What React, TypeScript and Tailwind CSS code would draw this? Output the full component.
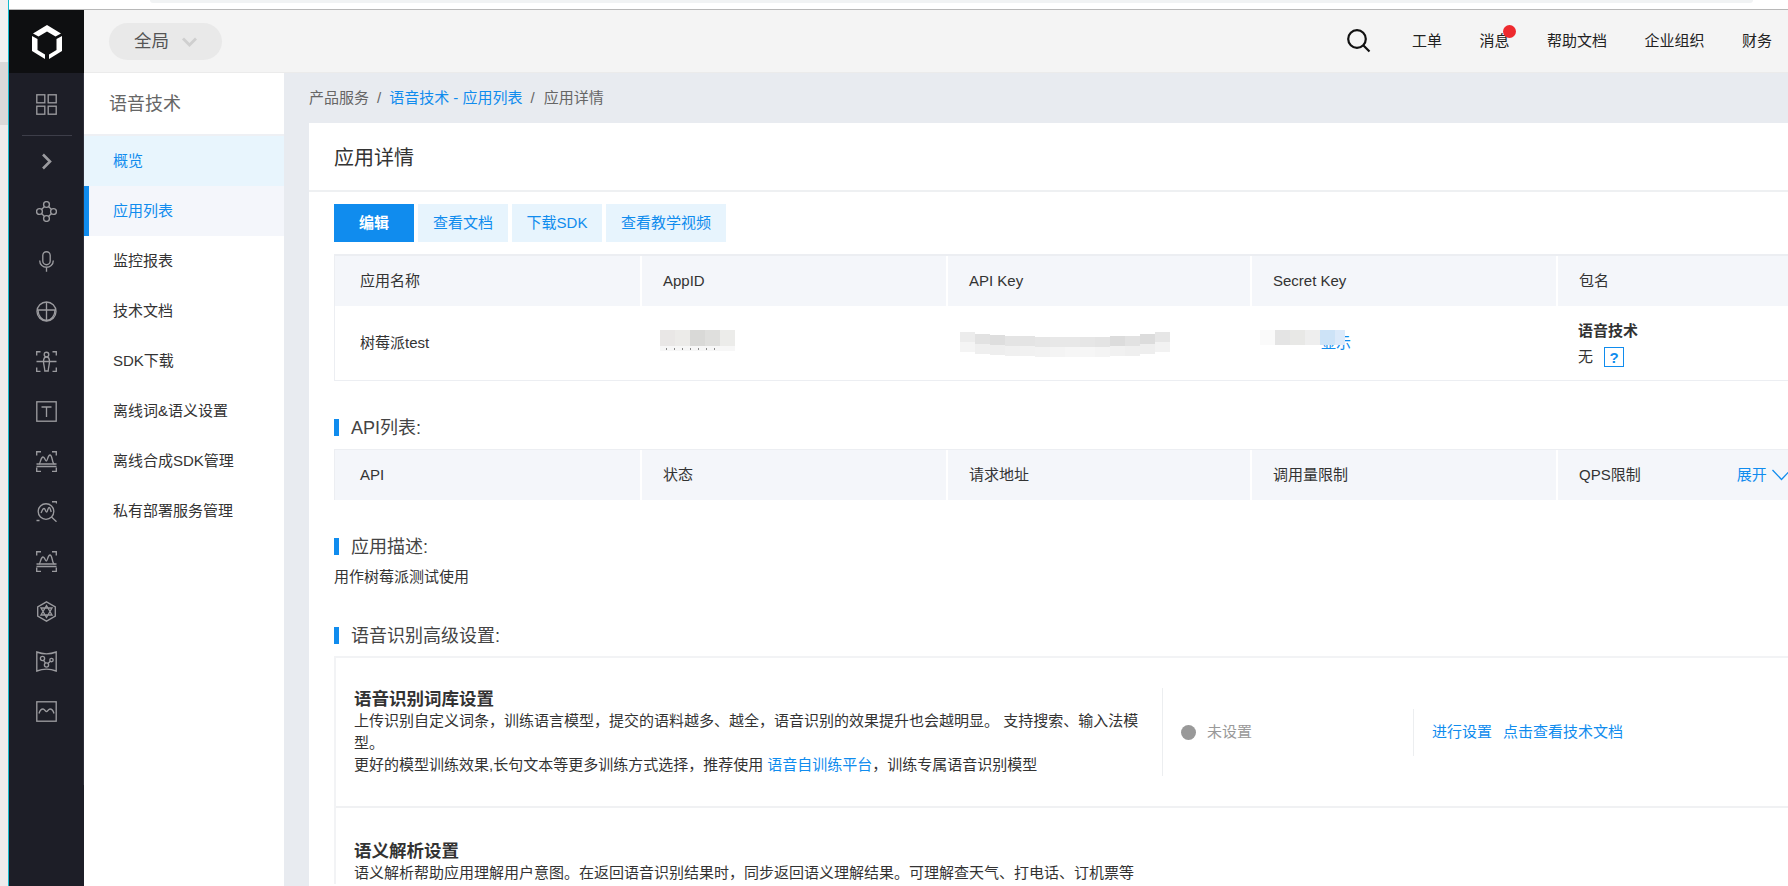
import React from "react";

const Ico = ({ children, w = 21 }: { children: React.ReactNode; w?: number }) => (
  <svg width={w} height={21} viewBox="0 0 21 21" fill="none" stroke="#9b9b9f" strokeWidth={1.35}>
    {children}
  </svg>
);

const Corners = () => (
  <path d="M.7 4.500V.7h4.300M16 .7h4.300v3.800M.7 16.500v3.800h4.300M16 20.300h4.300v-3.800" />
);
const Mountain = () => (
  <Ico>
    <Corners />
    <path d="M3 13c1.500 0 1.500-7 4-7 2 0 2 4 3.300 4s1.500-6 3.700-6c2.500 0 2 9 4.500 9" />
    <path d="M.5 13h20M.5 15.500h20" />
  </Ico>
);

const icons: React.ReactNode[] = [
  <svg width={21} height={21} viewBox="0 0 21 21" fill="none" stroke="#9b9b9f" strokeWidth={2.6} key="c">
    <path d="M7 3.500l7 7-7 7" />
  </svg>,
  <Ico key="n">
    <circle cx="10.500" cy="3.500" r="2.900" />
    <circle cx="3.500" cy="10.500" r="2.900" />
    <circle cx="17.500" cy="10.500" r="2.900" />
    <circle cx="10.500" cy="17.500" r="2.900" />
    <path d="M8.500 5.500 5.500 8.500M12.500 5.500 15.500 8.500M5.500 12.500 8.500 15.500M15.500 12.500 12.500 15.500" />
  </Ico>,
  <Ico key="m">
    <rect x="6.800" y=".7" width="7.400" height="13" rx="3.700" />
    <path d="M3.700 9.500c0 9 13.600 9 13.600 0M10.500 16v4.800" />
  </Ico>,
  <Ico key="g">
    <circle cx="10.500" cy="10.500" r="9.500" />
    <path d="M1 9h19M10.500 1v19M2 9c0 6 4 10.500 8.500 10.500S19 15 19 9" />
  </Ico>,
  <Ico key="p">
    <path d="M.7 4.500V.7h3.800M16.500.7h3.800v3.800M.7 16.500v3.800h3.800M16.500 20.300h3.800v-3.800" />
    <circle cx="10.500" cy="3.500" r="2.300" />
    <path d="M.5 10.500h20M7.500 10.500c0-6 6-6 6 0 0 3-1 5-1.300 9.500H8.800c-.3-4.500-1.300-6.500-1.300-9.500z" />
  </Ico>,
  <Ico key="t">
    <rect x=".8" y=".8" width="19.400" height="19.400" />
    <path d="M5.500 6h10M10.500 6v10" />
  </Ico>,
  <Mountain key="a" />,
  <Ico key="s">
    <circle cx="10" cy="10.500" r="7.800" />
    <path d="M5 12c1-2 1.500-4.500 3-4.500s1.300 3.500 2.500 3.500 1.200-4.500 2.700-4.500c1 0 1.300 2.500 2 4.500M15.500 16l5 4.700M16 .7h4.500v1.800M.5 19.500h3" />
  </Ico>,
  <Mountain key="b" />,
  <Ico key="h">
    <path d="M10.500.8l8.800 5v9.400l-8.800 5-8.800-5V5.800z" />
    <path d="M10.500 4.500l5.500 9.500H5zM10.500 16.500 5 7h11z" />
  </Ico>,
  <Ico key="r">
    <path d="M.8 1c6 2.300 13.400 2.300 19.400 0v19c-6-2.300-13.400-2.300-19.400 0z" />
    <circle cx="6.500" cy="7.500" r="2.100" />
    <circle cx="10.500" cy="14" r="2.100" />
    <circle cx="15.500" cy="9" r="1.700" />
    <path d="M7.600 9.400 9.500 12.200M12 12.500l2.300-2.300" />
  </Ico>,
  <Ico key="w">
    <rect x=".8" y=".8" width="19.400" height="19.400" />
    <path d="M3 12.500C4 9 5.500 8 7 8s2.500 2.500 3.500 2.500S12.500 8 14 8s3 1 4 4.500" />
  </Ico>,
];

const nav = ["概览", "应用列表", "监控报表", "技术文档", "SDK下载", "离线词&语义设置", "离线合成SDK管理", "私有部署服务管理"];

const Mosaic = ({ colors }: { colors: string[] }) => (
  <div className="flex">
    {colors.map((c, i) => (
      <div key={i} className="w-[15px] h-[15px] shrink-0" style={{ backgroundColor: c }} />
    ))}
  </div>
);

const Cell = ({ children, first, last }: { children: React.ReactNode; first?: boolean; last?: boolean }) => (
  <div className={`flex items-center h-[50px] bg-[#f4f6fa] whitespace-nowrap ${first ? "pl-[25px]" : "pl-[21px]"} ${last ? "" : "border-r-2 border-white"}`}>
    {children}
  </div>
);

const Heading = ({ children }: { children: React.ReactNode }) => (
  <div className="flex items-center h-[17px] gap-3">
    <div className="w-[5px] h-[17px] bg-[#108cee]" />
    <div className="text-[18px] text-[#444] leading-none">{children}</div>
  </div>
);

const cols = "grid grid-cols-[307px_306px_304px_306px_1fr]";

const keyCells: [string, string, number][] = [
  ["#ececec", "#f4f4f4", 0],
  ["#e2e2e2", "#efefef", 2],
  ["#dedede", "#eeeeee", 3],
  ["#e4e4e4", "#f0f0f0", 4],
  ["#e4e4e4", "#f1f1f1", 4],
  ["#e6e6e6", "#f2f2f2", 5],
  ["#e8e8e8", "#f4f4f4", 5],
  ["#e8e8e8", "#f6f6f6", 5],
  ["#e6e6e6", "#f6f6f6", 5],
  ["#e4e4e4", "#f4f4f4", 5],
  ["#dcdcdc", "#f1f1f1", 4],
  ["#e2e2e2", "#efefef", 4],
  ["#dcdcdc", "#eeeeee", 2],
  ["#e6e6e6", "#f2f2f2", 0],
];

export default function App() {
  return (
    <div className="flex w-[1788px] h-[886px] overflow-hidden bg-white text-[15px] text-[#333] font-['Liberation_Sans','Noto_Sans_CJK_SC',sans-serif]">
      <div className="w-[9px] flex flex-col border-r border-[#12b9cc]">
        <div className="h-[62px] bg-[#f1f1f1]" />
        <div className="h-[63px] bg-[#d9d9d9]" />
        <div className="flex-1 bg-[#ececec]" />
      </div>
      <div className="flex-1 flex flex-col min-w-0">
        <div className="h-[10px] bg-white border-b border-[#b8b8b8]">
          <div className="ml-[141px] w-[1603px] h-[3px] bg-[#f1f3f4] rounded-b-md" />
        </div>
        <div className="flex-1 flex min-h-0">
          <aside className="w-[75px] bg-[#1d1e27] flex flex-col">
            <div className="h-[63px] bg-[#0e0f11] flex items-center justify-center">
              <svg width="30" height="34" viewBox="0 0 30 34" fill="#fff">
                <path d="M15 0 29 8.500 23.500 11.500 15 6.500 6.500 11.500 1 8.500z" />
                <path d="M0 11 5.500 14V25L13 29.500V34L0 26z" />
                <path d="M30 11 24.500 14V25L17 29.500V34L30 26z" />
              </svg>
            </div>
            <div className="h-[712px] border-r border-[#2e2f3a] flex flex-col">
              <div className="h-[62px] flex items-center justify-center">
                <Ico>
                  <rect x=".8" y=".8" width="8" height="8" />
                  <rect x="12.200" y=".8" width="8" height="8" />
                  <rect x=".8" y="12.200" width="8" height="8" />
                  <rect x="12.200" y="12.200" width="8" height="8" />
                </Ico>
              </div>
              <div className="h-px w-[50px] ml-[13px] bg-[#3d3e49]" />
              {icons.map((ic, i) => (
                <div key={i} className="h-[50px] flex items-center justify-center">
                  {ic}
                </div>
              ))}
            </div>
          </aside>
          <div className="flex-1 flex flex-col min-w-0">
            <header className="h-[63px] bg-[#f4f4f4] border-b border-[#ebebeb] flex items-center pl-[25px] pr-[16px]">
              <div className="w-[113px] h-[37px] rounded-full bg-[#e9e9e9] flex items-center pl-[25px] pt-[1px] gap-[13px] text-[17.5px] text-[#555]">
                <span>全局</span>
                <svg width="15" height="10" viewBox="0 0 15 10" fill="none" stroke="#cfcfcf" strokeWidth="2.800">
                  <path d="M1 1.500l6.500 6.500L14 1.500" />
                </svg>
              </div>
              <div className="ml-auto flex items-center gap-[37.5px] text-[#222]">
                <svg width="24" height="24" viewBox="0 0 24 24" fill="none" stroke="#111" strokeWidth="2.200" className="mr-[3px]">
                  <circle cx="10" cy="10" r="8.800" />
                  <path d="M16.500 16.500l6 6" />
                </svg>
                <span>工单</span>
                <span className="relative">
                  消息
                  <span className="absolute -top-[5px] left-[24px] w-[13px] h-[13px] rounded-full bg-[#ee2a2e]" />
                </span>
                <span>帮助文档</span>
                <span>企业组织</span>
                <span>财务</span>
              </div>
            </header>
            <div className="flex-1 flex min-h-0">
              <nav className="w-[200px] bg-white flex flex-col">
                <div className="h-[63px] border-b-2 border-[#eef0f4] flex items-center pl-[25px] pt-[2px] text-[18px] text-[#666]">语音技术</div>
                {nav.map((n, i) => (
                  <div
                    key={n}
                    className={`h-[50px] flex items-center ${i === 0 ? "pl-[29px] bg-[#e8f5fd] text-[#108cee]" : i === 1 ? "pl-[24px] border-l-[5px] border-[#108cee] bg-[#f4f6fb] text-[#108cee]" : "pl-[29px] text-[#333]"}`}
                  >
                    {n}
                  </div>
                ))}
              </nav>
              <main className="flex-1 min-w-0 bg-[#e8ebf0] pl-[25px] flex flex-col">
                <div className="h-[50px] flex items-center text-[#666]">
                  <span>产品服务</span>
                  <span className="mx-[8px]">/</span>
                  <span className="text-[#108cee]">语音技术 - 应用列表</span>
                  <span className="ml-[8px] mr-[9px]">/</span>
                  <span>应用详情</span>
                </div>
                <section className="flex-1 bg-white min-h-0 overflow-hidden">
                  <div className="h-[69px] border-b-2 border-[#eef0f2] flex items-center pl-[25px] pt-[2px] text-[20px] text-[#333]">应用详情</div>
                  <div className="pl-[25px] pt-[12px]">
                    <div className="flex gap-[4px] h-[38px]">
                      <div className="w-[80px] bg-[#108cee] text-white font-bold flex items-center justify-center">编辑</div>
                      <div className="w-[90px] bg-[#e7f4fd] text-[#108cee] flex items-center justify-center">查看文档</div>
                      <div className="w-[90px] bg-[#e7f4fd] text-[#108cee] flex items-center justify-center">下载SDK</div>
                      <div className="w-[120px] bg-[#e7f4fd] text-[#108cee] flex items-center justify-center">查看教学视频</div>
                    </div>

                    <div className="mt-[12px] border-t-2 border-l border-b border-[#eceef2] h-[127px]">
                      <div className={cols}>
                        <Cell first>应用名称</Cell>
                        <Cell>AppID</Cell>
                        <Cell>API Key</Cell>
                        <Cell>Secret Key</Cell>
                        <Cell last>包名</Cell>
                      </div>
                      <div className={`${cols} h-[74px]`}>
                        <div className="pl-[25px] flex items-center">树莓派test</div>
                        <div className="relative">
                          <div className="absolute left-[18px] top-[24px]">
                            <div className="flex">
                              {["#e9e7e6", "#ecebe9", "#d9d9d7", "#dfdfdd", "#ececea"].map((c) => (
                                <div key={c} className="w-[15px] h-[16px]" style={{ backgroundColor: c }} />
                              ))}
                            </div>
                            <div className="w-[75px] h-[5px] bg-[#f7f7f7] flex items-center gap-[7px] pl-[6px]">
                              {[0, 1, 2, 3, 4, 5, 6].map((i) => (
                                <span key={i} className="w-px h-[2px] bg-[#8a8a8a]" />
                              ))}
                            </div>
                          </div>
                        </div>
                        <div className="relative">
                          <div className="absolute left-[12px] top-[26px] flex">
                            {keyCells.map((c, i) => (
                              <div key={i} className="w-[15px]" style={{ marginTop: c[2] }}>
                                <div className="h-[10px]" style={{ backgroundColor: c[0] }} />
                                <div className="h-[10px]" style={{ backgroundColor: c[1] }} />
                              </div>
                            ))}
                          </div>
                        </div>
                        <div className="relative flex items-center pl-[69px] text-[#108cee]">
                          显示
                          <div className="absolute left-[8px] top-[24px] w-[85px] overflow-hidden">
                            <Mosaic colors={["#fafafa", "#e4e4e4", "#e8e8e6", "#eeeeee", "#cde3f7", "#dceafa"]} />
                          </div>
                        </div>
                        <div className="pl-[20px] pt-[16px]">
                          <div className="font-bold h-[18px] leading-[18px] text-[#333]">语音技术</div>
                          <div className="flex items-center gap-[11px] mt-[6px]">
                            <span>无</span>
                            <span className="w-5 h-5 border border-[#108cee] text-[#108cee] font-bold flex items-center justify-center leading-none">?</span>
                          </div>
                        </div>
                      </div>
                    </div>

                    <div className="mt-[38px]">
                      <Heading>API列表:</Heading>
                    </div>
                    <div className={`${cols} mt-[13px] border-t border-l border-[#eceef2]`}>
                      <Cell first>API</Cell>
                      <Cell>状态</Cell>
                      <Cell>请求地址</Cell>
                      <Cell>调用量限制</Cell>
                      <Cell last>
                        <span>QPS限制</span>
                        <span className="ml-[96px] text-[#108cee]">展开</span>
                        <svg width="20" height="12" viewBox="0 0 20 12" fill="none" stroke="#108cee" strokeWidth="1.300" className="ml-[5px] shrink-0">
                          <path d="M.5 1l9 9.500 9-9.500" />
                        </svg>
                      </Cell>
                    </div>

                    <div className="mt-[38px]">
                      <Heading>应用描述:</Heading>
                    </div>
                    <div className="mt-[11px] h-[22px] leading-[22px]">用作树莓派测试使用</div>

                    <div className="mt-[39px]">
                      <Heading>语音识别高级设置:</Heading>
                    </div>
                    <div className="mt-[12px] border-t-2 border-l-2 border-[#f2f3f5]">
                      <div className="h-[150px] flex items-center border-b-2 border-[#f0f1f3]">
                        <div className="w-[826px] pl-[18px]">
                          <div className="text-[17.5px] font-bold leading-[22px] text-[#333]">语音识别词库设置</div>
                          <div className="w-[805px] leading-[22px]">
                            {"上传识别自定义词条\uFF0C训练语言模型\uFF0C提交的语料越多、越全\uFF0C语音识别的效果提升也会越明显。 支持搜索、输入法模型。"}
                            <br />
                            {"更好的模型训练效果,长句文本等更多训练方式选择\uFF0C推荐使用 "}
                            <span className="text-[#108cee]">语音自训练平台</span>
                            {"\uFF0C训练专属语音识别模型"}
                          </div>
                        </div>
                        <div className="w-[251px] h-[88px] border-l border-[#eceef0] flex items-center pl-[18px] gap-[11px] text-[#999]">
                          <span className="w-[15px] h-[15px] rounded-full bg-[#999]" />
                          未设置
                        </div>
                        <div className="h-[47px] border-l border-[#eceef0] flex items-center pl-[18px] gap-[11px] text-[#108cee]">
                          <span>进行设置</span>
                          <span>点击查看技术文档</span>
                        </div>
                      </div>
                      <div className="pl-[18px] pt-[32px]">
                        <div className="text-[17.5px] font-bold leading-[22px] text-[#333]">语义解析设置</div>
                        <div className="w-[805px] leading-[22px]">{"语义解析帮助应用理解用户意图。在返回语音识别结果时\uFF0C同步返回语义理解结果。可理解查天气、打电话、订机票等"}</div>
                      </div>
                    </div>
                  </div>
                </section>
              </main>
            </div>
          </div>
        </div>
      </div>
    </div>
  );
}
